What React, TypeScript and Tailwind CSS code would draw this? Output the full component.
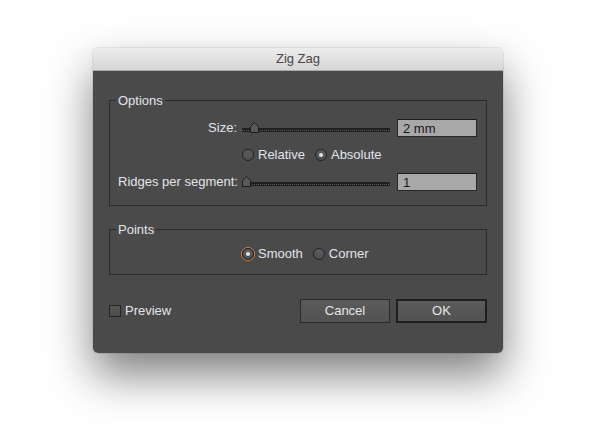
import React from "react";

const font = { fontFamily: '"Liberation Sans", Arial, sans-serif' };

function SliderThumb() {
  return (
    <svg width="9" height="11" viewBox="0 0 9 11" className="block">
      <path d="M4.5 0.5 L8.5 4.5 L8.5 10.5 L0.5 10.5 L0.5 4.5 Z" fill="#585858" stroke="#1b1b1b" />
    </svg>
  );
}

function Slider({ offset }: { offset: number }) {
  return (
    <div className="relative h-[18px] w-[148px]">
      <div className="absolute left-0 right-0 top-[9px] h-[4px] bg-[#1f1f1f] pt-[1.5px]">
        <div className="h-px bg-[repeating-linear-gradient(90deg,#5a5a5a_0px,#5a5a5a_1px,transparent_1px,transparent_2px)]" />
      </div>
      <div className="absolute top-[3px]" style={{ left: offset }}>
        <SliderThumb />
      </div>
    </div>
  );
}

function NumberField({ value }: { value: string }) {
  return (
    <div className="flex h-[18px] w-[80px] items-center border border-[#282828] border-t-[#1c1c1c] bg-[#a8a8a8] pl-[5px] text-[13px] leading-none text-[#161622]">
      {value}
    </div>
  );
}

function Radio({ label, checked, focused }: { label: string; checked?: boolean; focused?: boolean }) {
  return (
    <label className="flex items-center gap-[4px]">
      <span
        className={
          focused
            ? "flex h-[14px] w-[14px] -mx-px items-center justify-center rounded-full border border-[#d4843a]"
            : "flex h-[12px] w-[12px] items-center justify-center"
        }
      >
        <span className="flex h-[12px] w-[12px] items-center justify-center rounded-full border border-[#222] bg-gradient-to-b from-[#5e5e5e] to-[#4e4e4e]">
          {checked && <span className="h-[4px] w-[4px] rounded-full bg-[#e4e4e4]" />}
        </span>
      </span>
      <span>{label}</span>
    </label>
  );
}

function Group({ title, className, children }: { title: string; className?: string; children: React.ReactNode }) {
  return (
    <fieldset className={"border border-[#2c2c2c] " + (className ?? "")}>
      <legend className="ml-[6px] px-[2px] text-[13px] leading-[15px]">{title}</legend>
      {children}
    </fieldset>
  );
}

function Button({ label, primary }: { label: string; primary?: boolean }) {
  return (
    <button
      className={
        "flex h-[24px] items-center justify-center bg-gradient-to-b from-[#5b5b5b] to-[#525252] text-[13px] text-[#e6e6e6] " +
        (primary ? "w-[91px] border-2 border-[#1e1e1e]" : "w-[90px] border border-[#2a2a2a]")
      }
    >
      {label}
    </button>
  );
}

export default function App() {
  return (
    <div className="min-h-[435px] bg-white pt-[48px]" style={font}>
      <div className="ml-[93px] w-[410px] overflow-hidden rounded-[5px] shadow-[0_22px_45px_rgba(0,0,0,0.5),0_0_0_1px_rgba(0,0,0,0.08)]">
        <div className="flex h-[23px] items-center justify-center border-b border-[#a9a9a9] bg-gradient-to-b from-[#ededed] to-[#d6d6d6] text-[13px] text-[#474747]">
          Zig Zag
        </div>

        <div className="bg-[#4a4a4a] px-[16px] pb-[30px] pt-[22px] text-[13px] leading-[18px] text-[#e2e4ea]">
          <Group title="Options">
            <div className="grid grid-cols-[119px_148px_80px] items-center gap-y-[9px] pb-[14px] pl-[8px] pt-[11px]">
              <span className="whitespace-nowrap text-right">Size:</span>
              <div className="ml-[5px]">
                <Slider offset={8} />
              </div>
              <div className="ml-[12px]">
                <NumberField value="2 mm" />
              </div>

              <span />
              <div className="col-span-2 ml-[5px] flex h-[18px] items-center gap-[10px]">
                <Radio label="Relative" />
                <Radio label="Absolute" checked />
              </div>

              <span className="whitespace-nowrap text-right">Ridges per segment:</span>
              <div className="ml-[5px]">
                <Slider offset={0} />
              </div>
              <div className="ml-[12px]">
                <NumberField value="1" />
              </div>
            </div>
          </Group>

          <Group title="Points" className="mt-[16px]">
            <div className="box-content flex h-[18px] items-center gap-[10px] pb-[11px] pl-[132px] pt-[8px]">
              <Radio label="Smooth" checked focused />
              <Radio label="Corner" />
            </div>
          </Group>

          <div className="mt-[24px] flex items-center justify-between">
            <label className="flex items-center gap-[4px]">
              <span className="h-[12px] w-[12px] border border-[#262626] bg-gradient-to-b from-[#565656] to-[#4c4c4c]" />
              <span>Preview</span>
            </label>
            <div className="flex gap-[6px]">
              <Button label="Cancel" />
              <Button label="OK" primary />
            </div>
          </div>
        </div>
      </div>
    </div>
  );
}
